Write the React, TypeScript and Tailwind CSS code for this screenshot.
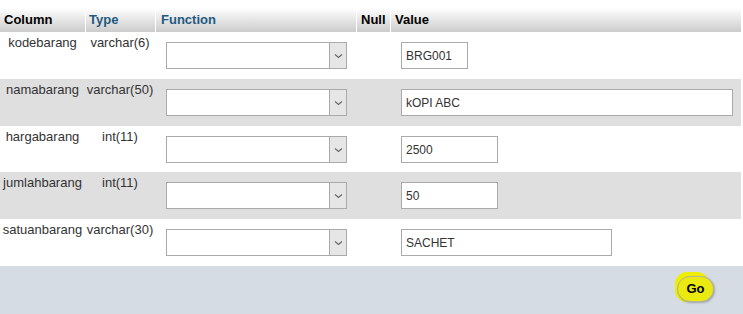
const rows = [
  { name: "kodebarang", type: "varchar(6)", value: "BRG001", w: "w-[67px]" },
  { name: "namabarang", type: "varchar(50)", value: "kOPI ABC", w: "w-[332px]" },
  { name: "hargabarang", type: "int(11)", value: "2500", w: "w-[97px]" },
  { name: "jumlahbarang", type: "int(11)", value: "50", w: "w-[97px]" },
  { name: "satuanbarang", type: "varchar(30)", value: "SACHET", w: "w-[211px]" },
];

const cols = "grid grid-cols-[85px_70px_201px_34px_1fr]";

function FakeSelect() {
  return (
    <div className="flex h-[27px] w-[181px] border border-[#aaaaaa] bg-white">
      <div className="flex-1" />
      <div className="flex w-[17px] items-center justify-center border-l border-[#aaaaaa] bg-[#e6e6e6]">
        <svg width="9" height="6" viewBox="0 0 9 6">
          <path d="M1 1.5 L4.5 4.5 L8 1.5" fill="none" stroke="#666" strokeWidth="1.1" />
        </svg>
      </div>
    </div>
  );
}

export default function App() {
  return (
    <div
      className="h-[314px] w-[743px] overflow-hidden bg-white pt-[8px] text-[13px] leading-4 text-[#333]"
      style={{ fontFamily: '"Liberation Sans", Arial, sans-serif' }}
    >
      <div className={`${cols} h-[24px] w-[741px] bg-gradient-to-b from-white to-[#cccccc] font-bold`}>
        <div className="flex items-center pl-[4px] text-black">Column</div>
        <div className="flex items-center border-l border-white pl-[3px] text-[#235a81]">Type</div>
        <div className="flex items-center border-l border-white pl-[5px] text-[#235a81]">Function</div>
        <div className="flex items-center border-l border-white pl-[4px] text-black">Null</div>
        <div className="flex items-center border-l border-white pl-[4px] text-black">Value</div>
      </div>

      {rows.map((r, i) => (
        <div
          key={r.name}
          className={`${cols} w-[741px] ${i === 2 ? "h-[46px]" : "h-[47px]"} ${
            i % 2 === 1 ? "bg-[#dfdfdf]" : "bg-white"
          }`}
        >
          <div className="pt-[3px] text-center">{r.name}</div>
          <div className="pt-[3px] text-center">{r.type}</div>
          <div className="pl-[11px] pt-[10px]">
            <FakeSelect />
          </div>
          <div />
          <div className="pl-[11px] pt-[10px]">
            <div
              className={`${r.w} flex h-[27px] items-center border border-[#aaaaaa] bg-white pl-[4px] text-[12px] text-[#333]`}
            >
              {r.value}
            </div>
          </div>
        </div>
      ))}

      <div className="flex h-[48px] w-[743px] justify-end bg-[#d5dce3] pr-[29px] pt-[10px]">
        <div className="relative h-[26px] w-[37px]">
          <div className="absolute -left-[2px] -top-[4px] h-[30px] w-[34px] rounded-[12px] bg-[#eeee00]" />
          <button className="relative flex h-[26px] w-[37px] items-center justify-center rounded-full border border-[#b4b4a0] bg-[#eaea10] text-[13px] font-bold text-black shadow-[1px_1px_2px_rgba(0,0,0,0.25)]">
            Go
          </button>
        </div>
      </div>
    </div>
  );
}
